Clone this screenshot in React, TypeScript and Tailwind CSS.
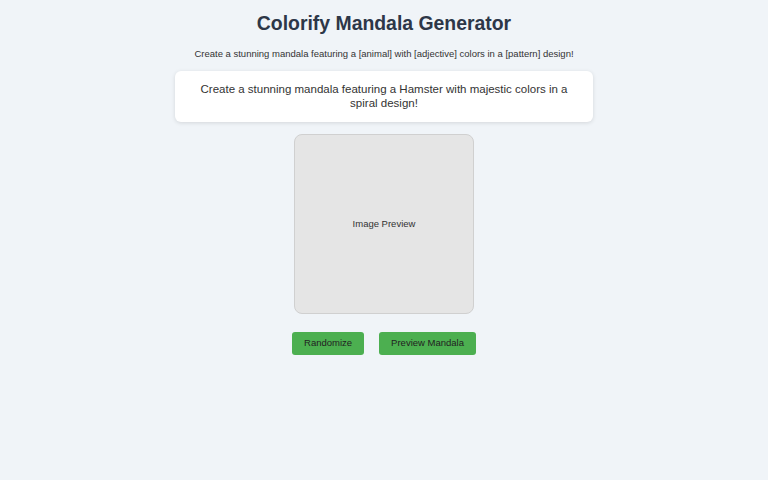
export default function App() {
  return (
    <div className="min-h-[480px] w-full bg-[#f0f4f8] flex flex-col items-center" style={{ fontFamily: '"Liberation Sans", Arial, sans-serif' }}>
      <h1 className="mt-[11px] text-[19.4px] font-bold text-[#2d3748] leading-[24px]">Colorify Mandala Generator</h1>
      <p className="mt-[13px] text-[9.5px] text-[#333] leading-[12px]">Create a stunning mandala featuring a [animal] with [adjective] colors in a [pattern] design!</p>
      <div className="mt-[11px] w-[418px] bg-white rounded-[6px] shadow-[0_1px_4px_rgba(0,0,0,0.12)] px-[20px] pt-[11px] pb-[12px] text-center text-[11.5px] leading-[14px] text-[#333]">
        Create a stunning mandala featuring a Hamster with majestic colors in a spiral design!
      </div>
      <div className="mt-[12px] w-[180px] h-[180px] bg-[#e5e5e5] border border-[#d0d0d0] rounded-[8px] flex items-center justify-center text-[9.5px] text-[#333]">
        Image Preview
      </div>
      <div className="mt-[18px] flex gap-[15px]">
        <button className="h-[23px] px-[12px] bg-[#4caf50] rounded-[3px] text-[9.5px] text-[#222]">Randomize</button>
        <button className="h-[23px] px-[12px] bg-[#4caf50] rounded-[3px] text-[9.5px] text-[#222]">Preview Mandala</button>
      </div>
    </div>
  );
}
